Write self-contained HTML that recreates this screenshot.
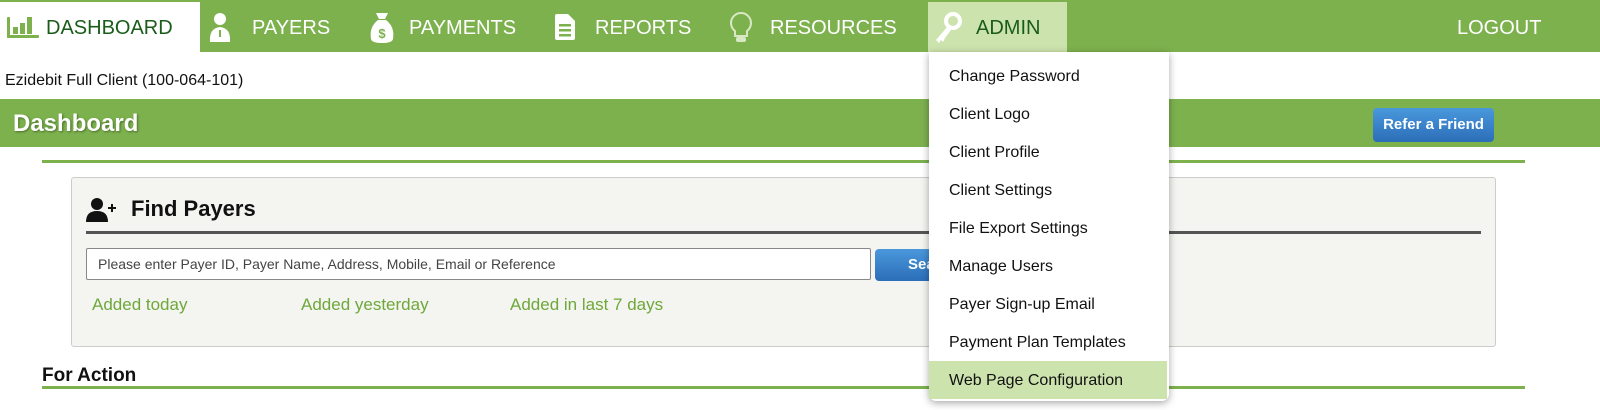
<!DOCTYPE html>
<html><head><style>
*{margin:0;padding:0;box-sizing:border-box}
body{width:1600px;height:410px;overflow:hidden;background:#fff;font-family:"Liberation Sans",Arial,sans-serif;position:relative}
.nav{position:absolute;left:0;top:0;width:1600px;height:52px;background:#7db14e}
.tab{position:absolute;top:2px;height:50px;font-size:20px;color:#fff;line-height:52px}
.abs{position:absolute}
.menu div{height:38px;line-height:40px;padding-left:20px;font-size:16px;color:#111}
</style></head><body>
<div class="nav"></div>
<div class="tab" style="left:0;width:200px;background:#fff;color:#1a5c1a">
 <svg class="abs" style="left:6px;top:12px" width="34" height="26" viewBox="0 0 34 26"><g fill="#7db14e"><rect x="1" y="3" width="3" height="21" rx="1"/><rect x="1" y="21" width="32" height="3" rx="1"/><rect x="7" y="13" width="5" height="7"/><rect x="14" y="9" width="5" height="11"/><rect x="21" y="3" width="5" height="17"/></g></svg>
 <span class="abs" style="left:46px">DASHBOARD</span></div>
<div class="tab" style="left:206px">
 <svg class="abs" style="left:2px;top:10px" width="24" height="32" viewBox="0 0 24 32"><g fill="#fff"><circle cx="12" cy="7" r="6"/><path d="M2 30 Q1 16 12 15 Q23 16 22 30Z"/></g><rect x="11" y="18" width="2" height="7" fill="#7db14e"/></svg>
 <span class="abs" style="left:46px">PAYERS</span></div>
<div class="tab" style="left:364px">
 <svg class="abs" style="left:3px;top:9px" width="30" height="34" viewBox="0 0 30 34"><path d="M9 2h12l-3 6h-6z M11 9h8 Q28 16 26 28 Q25 32 15 32 Q5 32 4 28 Q2 16 11 9Z" fill="#fff"/><text x="15" y="27" font-size="13" font-weight="bold" text-anchor="middle" fill="#7db14e">$</text></svg>
 <span class="abs" style="left:45px">PAYMENTS</span></div>
<div class="tab" style="left:552px">
 <svg class="abs" style="left:2px;top:11px" width="22" height="28" viewBox="0 0 22 28"><path d="M3 1h11l7 7v17a2 2 0 0 1-2 2H3a2 2 0 0 1-2-2V3a2 2 0 0 1 2-2z" fill="#fff"/><g fill="#7db14e"><rect x="5" y="11" width="12" height="2.5"/><rect x="5" y="16" width="12" height="2.5"/><rect x="5" y="21" width="12" height="2.5"/></g></svg>
 <span class="abs" style="left:43px">REPORTS</span></div>
<div class="tab" style="left:728px">
 <svg class="abs" style="left:0;top:9px" width="26" height="34" viewBox="0 0 26 34"><path d="M13 2a10 10 0 0 0-6 18v5h12v-5a10 10 0 0 0-6-18z" fill="none" stroke="#d8e8c4" stroke-width="2"/><rect x="8" y="26" width="10" height="5" rx="2" fill="#d8e8c4"/></svg>
 <span class="abs" style="left:42px">RESOURCES</span></div>
<div class="tab" style="left:928px;width:139px;background:#cde3ad;color:#1a5c1a">
 <svg class="abs" style="left:5px;top:10px" width="30" height="32" viewBox="0 0 30 32"><circle cx="20" cy="9" r="7" fill="none" stroke="#fff" stroke-width="4"/><path d="M15 14 L3 28 L6 31 L8 28 L10 30 L12 26 L18 18" fill="#fff"/></svg>
 <span class="abs" style="left:48px">ADMIN</span></div>
<div class="tab" style="left:1457px">LOGOUT</div>

<div class="abs" style="left:5px;top:72px;font-size:16px;color:#111">Ezidebit Full Client (100-064-101)</div>
<div class="abs" style="left:0;top:99px;width:1600px;height:48px;background:#7db14e"></div>
<div class="abs" style="left:13px;top:110px;font-size:24px;font-weight:bold;color:#fff;text-shadow:1px 1px 2px #4a6e2a">Dashboard</div>
<div class="abs" style="left:1373px;top:108px;width:121px;height:34px;border-radius:4px;background:linear-gradient(#4a98dc,#2b6eb8);color:#fff;font-weight:bold;font-size:15px;text-align:center;line-height:34px">Refer a Friend</div>
<div class="abs" style="left:42px;top:160px;width:1483px;height:3px;background:#7db14e"></div>

<div class="abs" style="left:71px;top:177px;width:1425px;height:170px;background:#f4f4f1;border:1px solid #ccc;border-radius:3px"></div>
<svg class="abs" style="left:86px;top:197px" width="32" height="26" viewBox="0 0 32 26"><circle cx="11" cy="7" r="6" fill="#111"/><path d="M0 25 Q0 14 11 14 Q22 14 22 25Z" fill="#111"/><path d="M22 11h8M26 7v8" stroke="#111" stroke-width="2"/></svg>
<div class="abs" style="left:131px;top:196px;font-size:22px;font-weight:bold;color:#111">Find Payers</div>
<div class="abs" style="left:86px;top:231px;width:1395px;height:3px;background:#555"></div>
<div class="abs" style="left:86px;top:248px;width:785px;height:32px;background:#fff;border:1px solid #888;border-radius:2px;font-size:14px;color:#444;line-height:31px;padding-left:11px">Please enter Payer ID, Payer Name, Address, Mobile, Email or Reference</div>
<div class="abs" style="left:875px;top:249px;width:90px;height:32px;border-radius:4px;background:linear-gradient(#4a98dc,#2b6eb8);color:#fff;font-weight:bold;font-size:15px;line-height:32px;padding-left:33px">Search</div>
<div class="abs" style="left:92px;top:295px;font-size:17px;color:#6ea83a">Added today</div>
<div class="abs" style="left:301px;top:295px;font-size:17px;color:#6ea83a">Added yesterday</div>
<div class="abs" style="left:510px;top:295px;font-size:17px;color:#6ea83a">Added in last 7 days</div>
<div class="abs" style="left:42px;top:365px;font-size:19px;font-weight:bold;color:#111">For Action</div>
<div class="abs" style="left:42px;top:386px;width:1483px;height:3px;background:#7db14e"></div>

<div class="abs menu" style="left:929px;top:52px;width:240px;height:349px;background:#fff;border-radius:0 0 7px 7px;box-shadow:0 2px 8px rgba(0,0,0,.35);padding-top:5px">
<div>Change Password</div><div>Client Logo</div><div>Client Profile</div><div>Client Settings</div><div>File Export Settings</div><div>Manage Users</div><div>Payer Sign-up Email</div><div>Payment Plan Templates</div><div style="background:#cde3ad;margin-right:2px">Web Page Configuration</div>
</div>
</body></html>
